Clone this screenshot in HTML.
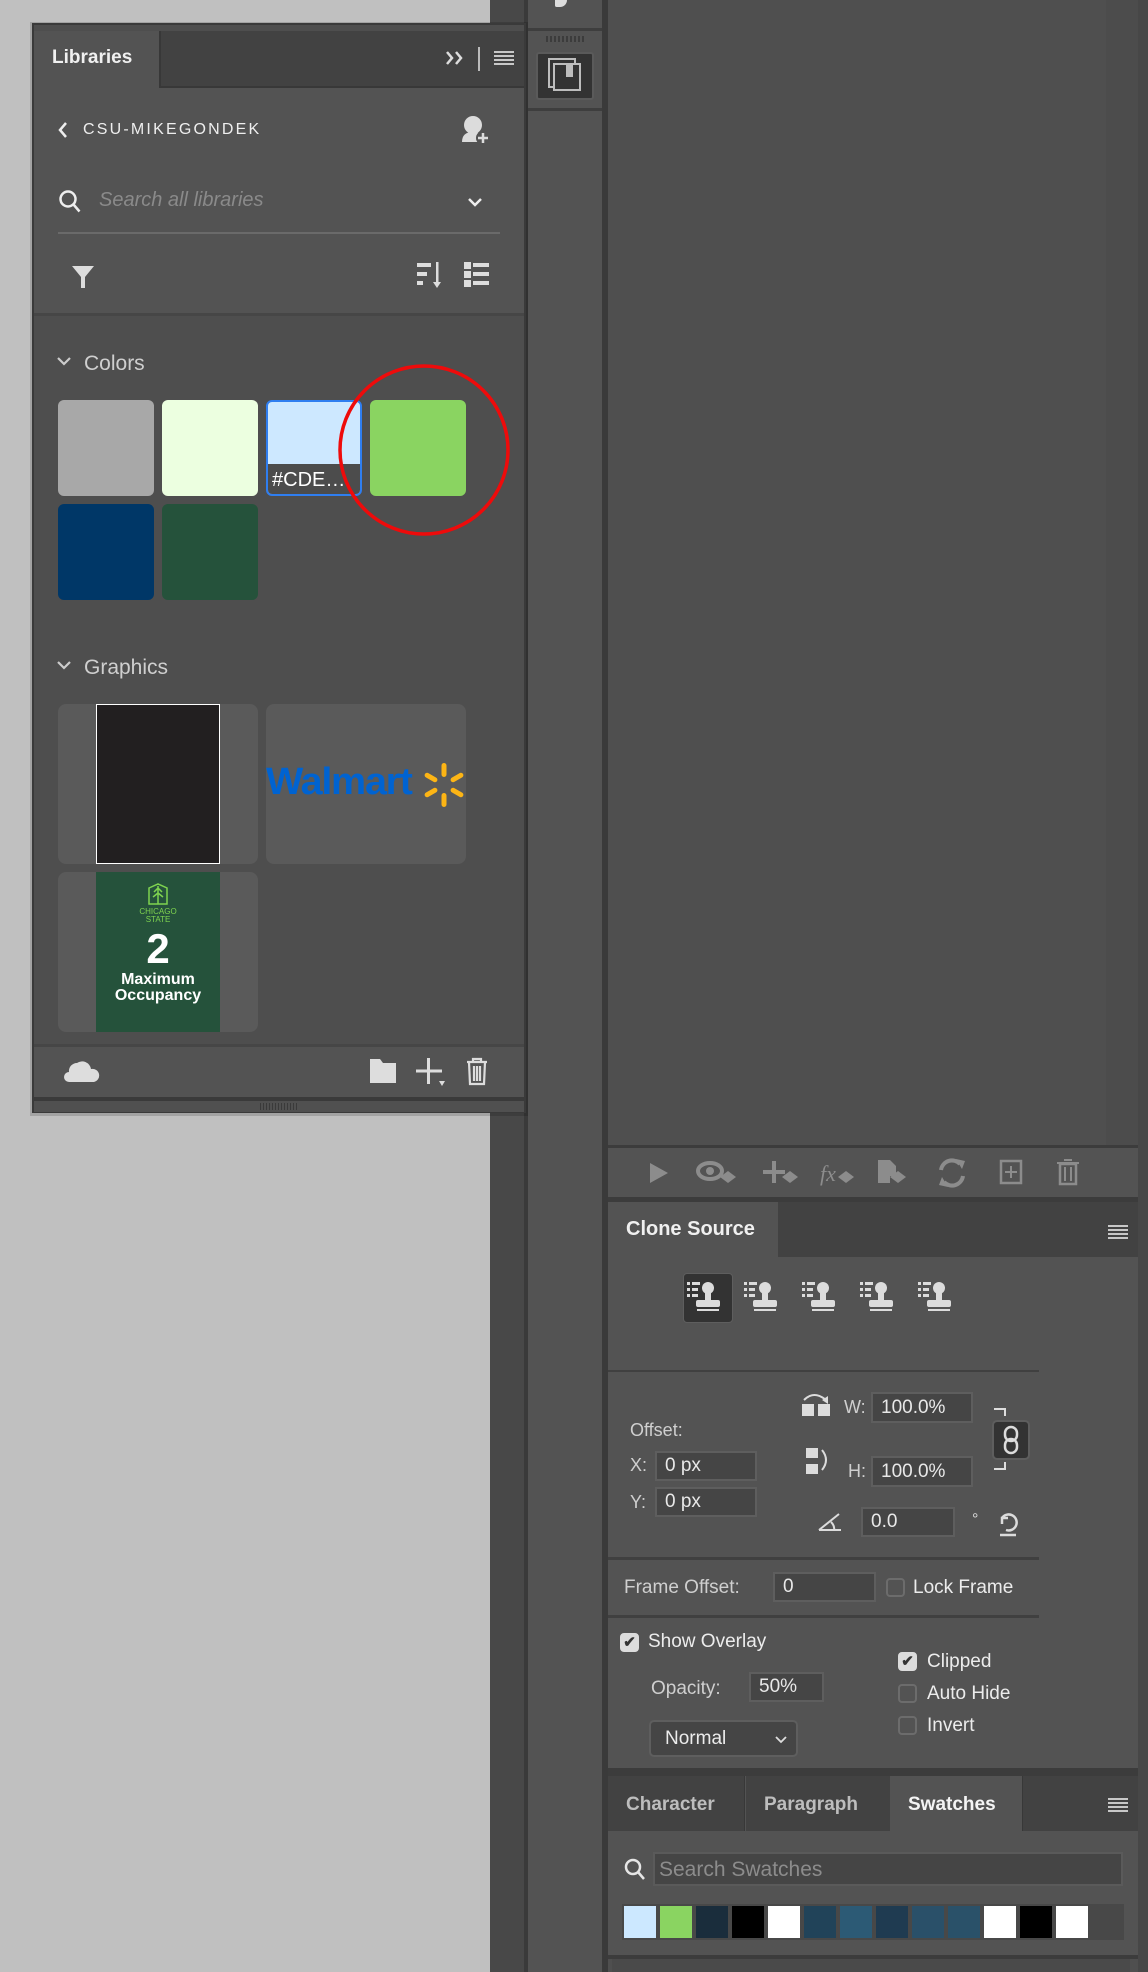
<!DOCTYPE html>
<html><head><meta charset="utf-8"><style>
*{margin:0;padding:0;box-sizing:border-box}
body{width:1148px;height:1972px;background:#c0c0c0;position:relative;overflow:hidden;font-family:"Liberation Sans",sans-serif;color:#e6e6e6}
.a{position:absolute}
.t{position:absolute;white-space:nowrap;line-height:1}
.fld{position:absolute;background:#454545;border:2px solid #5e5e5e;color:#e8e8e8;font-size:19px;padding-left:8px;display:flex;align-items:center}
.cb{position:absolute;width:19px;height:19px;border:2px solid #6c6c6c;border-radius:4px}
.cbk{background:#dcdcdc;border-color:#dcdcdc}
.sw{position:absolute;top:1906px;width:32px;height:32px}
</style></head><body>

<div class="a" style="left:490px;top:0;width:38px;height:1972px;background:#484848"></div>
<div class="a" style="left:524px;top:0;width:4px;height:1972px;background:#3a3a3a"></div>
<div class="a" style="left:528px;top:0;width:74px;height:1972px;background:#535353"></div>
<div class="a" style="left:528px;top:28px;width:74px;height:3px;background:#3e3e3e"></div>
<div class="a" style="left:528px;top:108px;width:74px;height:3px;background:#3e3e3e"></div>
<div class="a" style="left:546px;top:36px;width:40px;height:6px;background:repeating-linear-gradient(90deg,#3c3c3c 0 2px,transparent 2px 4px)"></div>
<div class="a" style="left:536px;top:52px;width:58px;height:48px;background:#333;border:2px solid #5a5a5a;border-radius:3px"></div>
<div class="a" style="left:548px;top:58px;width:28px;height:30px;border:2px solid #bdbdbd"></div>
<div class="a" style="left:553px;top:63px;width:28px;height:28px;border:2px solid #bdbdbd;background:#333"></div>
<div class="a" style="left:566px;top:63px;width:7px;height:14px;background:#bdbdbd"></div>
<div class="a" style="left:555px;top:0;width:12px;height:7px;background:#ddd;border-radius:0 0 8px 2px"></div>
<div class="a" style="left:602px;top:0;width:6px;height:1972px;background:#3a3a3a"></div>

<div class="a" style="left:608px;top:0;width:540px;height:1972px;background:#4f4f4f"></div>
<div class="a" style="left:1138px;top:0;width:10px;height:1972px;background:#474747"></div>
<div class="a" style="left:1106px;top:0;width:32px;height:1147px;background:#4c4c4c"></div>

<div class="a" style="left:608px;top:1145px;width:530px;height:3px;background:#3c3c3c"></div>
<div class="a" style="left:608px;top:1148px;width:530px;height:50px;background:#535353"></div>
<div class="a" style="left:608px;top:1197px;width:530px;height:5px;background:#3c3c3c"></div>
<svg class="a" style="left:640px;top:1155px" width="480" height="40" viewBox="0 0 480 40" fill="#8c8c8c" stroke="#8c8c8c">
<polygon points="10,8 28,18 10,28" stroke="none"/>
<ellipse cx="70" cy="16" rx="12" ry="8" fill="none" stroke-width="4"/><circle cx="70" cy="16" r="4" stroke="none"/><polygon points="80,22 88,16 96,22 88,28" stroke="none"/>
<path d="M134 6v22M123 17h22" stroke-width="4" fill="none"/><polygon points="142,22 150,16 158,22 150,28" stroke="none"/>
<text x="180" y="26" font-family="Liberation Serif" font-style="italic" font-size="22" stroke="none">fx</text><polygon points="198,22 206,16 214,22 206,28" stroke="none"/>
<path d="M238 5h12l6 6v10h-6v7h-12z" stroke="none"/><polygon points="250,22 258,16 266,22 258,28" stroke="none"/>
<path d="M301 15a11 11 0 0 1 19-6M323 21a11 11 0 0 1-19 6" fill="none" stroke-width="4"/><polygon points="316,4 325,6 322,14" stroke="none"/><polygon points="308,32 299,30 302,22" stroke="none"/>
<rect x="361" y="6" width="20" height="22" fill="none" stroke-width="2.5"/><path d="M371 11v12M365 17h12" stroke-width="2"/>
<rect x="420" y="9" width="16" height="20" fill="none" stroke-width="2.5"/><path d="M417 8h22M424 5h8M425 12v14M431 12v14" stroke-width="2"/>
</svg>

<div class="a" style="left:608px;top:1202px;width:530px;height:566px;background:#535353"></div>
<div class="a" style="left:778px;top:1202px;width:360px;height:55px;background:#424242"></div>
<div class="t" style="left:626px;top:1219px;font-size:20px;font-weight:bold;color:#f0f0f0">Clone Source</div>
<div class="a" style="left:1108px;top:1225px;width:20px;height:14px;background:repeating-linear-gradient(#c8c8c8 0 2px,transparent 2px 4px)"></div>
<div class="a" style="left:683px;top:1273px;width:50px;height:50px;background:#333;border:1px solid #5e5e5e;border-radius:4px"></div>
<svg class="a" style="left:683px;top:1278px" width="280" height="40" viewBox="0 0 280 40" fill="#dcdcdc">
<g id="st"><rect x="4" y="4" width="3" height="3"/><rect x="9" y="4" width="8" height="3"/><rect x="4" y="10" width="3" height="3"/><rect x="9" y="10" width="6" height="3"/><rect x="4" y="16" width="3" height="3"/><rect x="9" y="16" width="6" height="3"/><circle cx="25" cy="10" r="6"/><rect x="22" y="12" width="6" height="12"/><rect x="13" y="22" width="24" height="7" rx="2"/><rect x="14" y="31" width="22" height="2"/></g>
<use href="#st" x="57"/><use href="#st" x="115"/><use href="#st" x="173"/><use href="#st" x="231"/>
</svg>
<div class="a" style="left:608px;top:1370px;width:431px;height:2px;background:#404040"></div>
<div class="t" style="left:630px;top:1421px;font-size:18px;color:#cfcfcf">Offset:</div>
<div class="t" style="left:630px;top:1456px;font-size:18px;color:#cfcfcf">X:</div>
<div class="t" style="left:630px;top:1493px;font-size:18px;color:#cfcfcf">Y:</div>
<div class="fld" style="left:655px;top:1451px;width:102px;height:30px">0 px</div>
<div class="fld" style="left:655px;top:1487px;width:102px;height:30px">0 px</div>
<svg class="a" style="left:800px;top:1390px" width="40" height="100" viewBox="0 0 40 100" fill="#dcdcdc" stroke="#dcdcdc">
<rect x="2" y="14" width="12" height="12" stroke="none"/><rect x="18" y="14" width="12" height="12" stroke="none"/><path d="M4 10q10-10 22 0" fill="none" stroke-width="2"/><polygon points="28,6 28,14 22,10" stroke="none"/>
<rect x="6" y="58" width="12" height="10" stroke="none"/><rect x="6" y="74" width="12" height="10" stroke="none"/><path d="M22 60q8 10 0 20" fill="none" stroke-width="2"/>
</svg>
<svg class="a" style="left:815px;top:1506px" width="30" height="30" viewBox="0 0 30 30" fill="none" stroke="#dcdcdc" stroke-width="2"><path d="M4 24h22M4 24L24 8M16 16q4 4 3 8"/></svg>
<div class="t" style="left:844px;top:1398px;font-size:18px;color:#cfcfcf">W:</div>
<div class="t" style="left:848px;top:1462px;font-size:18px;color:#cfcfcf">H:</div>
<div class="fld" style="left:871px;top:1392px;width:102px;height:31px">100.0%</div>
<div class="fld" style="left:871px;top:1456px;width:102px;height:31px">100.0%</div>
<div class="fld" style="left:861px;top:1507px;width:94px;height:30px">0.0</div>
<div class="t" style="left:972px;top:1512px;font-size:16px;color:#ddd">°</div>
<svg class="a" style="left:992px;top:1508px" width="30" height="30" viewBox="0 0 30 30" fill="none" stroke="#dcdcdc" stroke-width="2.5"><path d="M10 10a8 8 0 1 1 4 12M10 16V10h6M8 27h16"/></svg>
<div class="a" style="left:994px;top:1408px;width:12px;height:8px;border-top:2px solid #ddd;border-right:2px solid #ddd"></div>
<div class="a" style="left:994px;top:1462px;width:12px;height:8px;border-bottom:2px solid #ddd;border-right:2px solid #ddd"></div>
<div class="a" style="left:992px;top:1420px;width:38px;height:40px;background:#333;border:2px solid #5e5e5e;border-radius:5px"></div>
<svg class="a" style="left:1001px;top:1424px" width="20" height="32" viewBox="0 0 20 32" fill="none" stroke="#dcdcdc" stroke-width="2.5"><rect x="4" y="3" width="12" height="14" rx="6"/><rect x="4" y="15" width="12" height="14" rx="6"/></svg>
<div class="a" style="left:608px;top:1557px;width:431px;height:3px;background:#404040"></div>
<div class="t" style="left:624px;top:1578px;font-size:19px;color:#cfcfcf">Frame Offset:</div>
<div class="fld" style="left:773px;top:1572px;width:103px;height:30px">0</div>
<div class="cb" style="left:886px;top:1578px"></div>
<div class="t" style="left:913px;top:1578px;font-size:19px;color:#ececec">Lock Frame</div>
<div class="a" style="left:608px;top:1615px;width:431px;height:3px;background:#404040"></div>
<div class="cb cbk" style="left:620px;top:1633px;color:#333;font-size:15px;line-height:16px;text-align:center;font-weight:bold">✔</div>
<div class="t" style="left:648px;top:1632px;font-size:19px;color:#ececec">Show Overlay</div>
<div class="t" style="left:651px;top:1679px;font-size:19px;color:#cfcfcf">Opacity:</div>
<div class="fld" style="left:749px;top:1672px;width:75px;height:30px">50%</div>
<div class="a" style="left:649px;top:1720px;width:149px;height:37px;background:#454545;border:2px solid #5e5e5e;border-radius:5px"></div>
<div class="t" style="left:665px;top:1729px;font-size:19px;color:#ececec">Normal</div>
<svg class="a" style="left:774px;top:1734px" width="14" height="10" viewBox="0 0 14 10" fill="none" stroke="#ddd" stroke-width="1.8"><path d="M2 3l5 5 5-5"/></svg>
<div class="cb cbk" style="left:898px;top:1652px;color:#333;font-size:15px;line-height:16px;text-align:center;font-weight:bold">✔</div>
<div class="t" style="left:927px;top:1652px;font-size:19px;color:#ececec">Clipped</div>
<div class="cb" style="left:898px;top:1684px"></div>
<div class="t" style="left:927px;top:1684px;font-size:19px;color:#ececec">Auto Hide</div>
<div class="cb" style="left:898px;top:1716px"></div>
<div class="t" style="left:927px;top:1716px;font-size:19px;color:#ececec">Invert</div>
<div class="a" style="left:608px;top:1768px;width:530px;height:8px;background:#3c3c3c"></div>

<div class="a" style="left:608px;top:1776px;width:530px;height:180px;background:#535353"></div>
<div class="a" style="left:608px;top:1776px;width:137px;height:55px;background:#424242;border-right:1px solid #383838"></div>
<div class="a" style="left:746px;top:1776px;width:144px;height:55px;background:#424242"></div>
<div class="a" style="left:1022px;top:1776px;width:116px;height:55px;background:#424242;border-left:1px solid #383838"></div>
<div class="t" style="left:626px;top:1795px;font-size:19px;font-weight:bold;color:#bdbdbd">Character</div>
<div class="t" style="left:764px;top:1795px;font-size:19px;font-weight:bold;color:#bdbdbd">Paragraph</div>
<div class="t" style="left:908px;top:1795px;font-size:19px;font-weight:bold;color:#f4f4f4">Swatches</div>
<div class="a" style="left:1108px;top:1798px;width:20px;height:14px;background:repeating-linear-gradient(#c8c8c8 0 2px,transparent 2px 4px)"></div>
<svg class="a" style="left:624px;top:1858px" width="22" height="24" viewBox="0 0 22 24" fill="none" stroke="#e6e6e6" stroke-width="2.5"><circle cx="9" cy="9" r="7"/><path d="M14 14l6 7"/></svg>
<div class="a" style="left:653px;top:1852px;width:470px;height:34px;background:#454545;border:2px solid #5a5a5a"></div>
<div class="t" style="left:659px;top:1859px;font-size:21px;color:#8c8c8c">Search Swatches</div>
<div class="a" style="left:622px;top:1904px;width:502px;height:36px;background:#484848"></div>
<div class="sw" style="left:624px;background:#cce8ff"></div>
<div class="sw" style="left:660px;background:#8ad461"></div>
<div class="sw" style="left:696px;background:#1a2d3c"></div>
<div class="sw" style="left:732px;background:#000"></div>
<div class="sw" style="left:768px;background:#fff"></div>
<div class="sw" style="left:804px;background:#214359"></div>
<div class="sw" style="left:840px;background:#2c5a75"></div>
<div class="sw" style="left:876px;background:#1f3b51"></div>
<div class="sw" style="left:912px;background:#2a5069"></div>
<div class="sw" style="left:948px;background:#2a5169"></div>
<div class="sw" style="left:984px;background:#fff"></div>
<div class="sw" style="left:1020px;background:#000"></div>
<div class="sw" style="left:1056px;background:#fff"></div>
<div class="a" style="left:608px;top:1955px;width:530px;height:4px;background:#3c3c3c"></div>
<div class="a" style="left:612px;top:1959px;width:518px;height:13px;background:#4a4a4a"></div>

<div class="a" style="left:30px;top:22px;width:498px;height:1094px;background:rgba(0,0,0,0.15)"></div>
<div class="a" style="left:32px;top:23px;width:494px;height:1090px;background:#4e4e4e;border:2px solid #3a3a3a"></div>
<div class="a" style="left:34px;top:31px;width:490px;height:56px;background:#424242"></div>
<div class="a" style="left:34px;top:31px;width:127px;height:57px;background:#535353;border-right:2px solid #383838"></div>
<div class="a" style="left:161px;top:86px;width:363px;height:2px;background:#383838"></div>
<div class="t" style="left:52px;top:48px;font-size:19px;font-weight:bold;color:#f0f0f0">Libraries</div>
<svg class="a" style="left:444px;top:49px" width="22" height="18" viewBox="0 0 22 18" fill="none" stroke="#ddd" stroke-width="2.5"><path d="M3 3l5 6-5 6M12 3l5 6-5 6"/></svg>
<div class="a" style="left:478px;top:47px;width:2px;height:24px;background:#bbb"></div>
<div class="a" style="left:494px;top:51px;width:20px;height:14px;background:repeating-linear-gradient(#c8c8c8 0 2px,transparent 2px 4px)"></div>
<div class="a" style="left:34px;top:88px;width:490px;height:227px;background:#535353"></div>
<svg class="a" style="left:56px;top:120px" width="14" height="20" viewBox="0 0 14 20" fill="none" stroke="#eee" stroke-width="2.5"><path d="M10 3L4 10l6 7"/></svg>
<div class="t" style="left:83px;top:122px;font-size:16px;color:#eee;letter-spacing:2.2px">CSU-MIKEGONDEK</div>
<svg class="a" style="left:458px;top:114px" width="34" height="32" viewBox="0 0 34 32" fill="#dcdcdc"><circle cx="15" cy="11" r="9"/><path d="M4 28q0-10 11-10t11 10z"/><circle cx="25" cy="24" r="7" fill="#535353"/><path d="M25 19v10M20 24h10" stroke="#dcdcdc" stroke-width="2.5"/></svg>
<svg class="a" style="left:58px;top:189px" width="26" height="26" viewBox="0 0 26 26" fill="none" stroke="#eee" stroke-width="2.5"><circle cx="10" cy="10" r="7.5"/><path d="M15.5 15.5l6 7"/></svg>
<div class="t" style="left:99px;top:190px;font-size:20px;font-style:italic;color:#8a8a8a">Search all libraries</div>
<svg class="a" style="left:466px;top:196px" width="18" height="12" viewBox="0 0 18 12" fill="none" stroke="#eee" stroke-width="2.5"><path d="M3 3l6 6 6-6"/></svg>
<div class="a" style="left:58px;top:232px;width:442px;height:2px;background:#6a6a6a"></div>
<svg class="a" style="left:70px;top:264px" width="26" height="26" viewBox="0 0 26 26" fill="#ddd"><path d="M2 2h22L15 13v11h-4V13z"/></svg>
<svg class="a" style="left:415px;top:260px" width="80" height="30" viewBox="0 0 80 30" fill="#ddd"><rect x="2" y="3" width="14" height="4"/><rect x="2" y="12" width="10" height="4"/><rect x="2" y="21" width="6" height="4"/><rect x="21" y="2" width="2.5" height="22"/><path d="M18 22l4 6 4-6z"/><rect x="49" y="2" width="7" height="7"/><rect x="58" y="3" width="16" height="4"/><rect x="49" y="11" width="7" height="7"/><rect x="58" y="12" width="16" height="4"/><rect x="49" y="20" width="7" height="7"/><rect x="58" y="21" width="16" height="4"/></svg>
<div class="a" style="left:34px;top:313px;width:490px;height:3px;background:#464646"></div>

<svg class="a" style="left:56px;top:356px" width="16" height="12" viewBox="0 0 16 12" fill="none" stroke="#ccc" stroke-width="2.2"><path d="M2 2l6 6 6-6"/></svg>
<div class="t" style="left:84px;top:353px;font-size:21px;color:#cfcfcf">Colors</div>
<div class="a" style="left:58px;top:400px;width:96px;height:96px;background:#a8a8a8;border-radius:6px"></div>
<div class="a" style="left:162px;top:400px;width:96px;height:96px;background:#ecffe0;border-radius:6px"></div>
<div class="a" style="left:266px;top:400px;width:96px;height:96px;background:#cde8ff;border:2px solid #2f7ef0;border-radius:6px;overflow:hidden"><div class="a" style="left:0;top:62px;width:92px;height:34px;background:#4c4c4c"></div><div class="t" style="left:4px;top:68px;font-size:20px;color:#fff">#CDE…</div></div>
<div class="a" style="left:370px;top:400px;width:96px;height:96px;background:#8ad461;border-radius:6px"></div>
<div class="a" style="left:58px;top:504px;width:96px;height:96px;background:#003767;border-radius:6px"></div>
<div class="a" style="left:162px;top:504px;width:96px;height:96px;background:#25523b;border-radius:6px"></div>
<svg class="a" style="left:334px;top:364px" width="180" height="180" viewBox="0 0 180 180"><ellipse cx="90" cy="86" rx="84" ry="84" fill="none" stroke="#ee0b0b" stroke-width="3.5"/></svg>

<svg class="a" style="left:56px;top:660px" width="16" height="12" viewBox="0 0 16 12" fill="none" stroke="#ccc" stroke-width="2.2"><path d="M2 2l6 6 6-6"/></svg>
<div class="t" style="left:84px;top:657px;font-size:21px;color:#cfcfcf">Graphics</div>
<div class="a" style="left:58px;top:704px;width:200px;height:160px;background:#5a5a5a;border-radius:8px"></div>
<div class="a" style="left:96px;top:704px;width:124px;height:160px;background:#221f20;border:1.5px solid #fff"></div>
<div class="a" style="left:266px;top:704px;width:200px;height:160px;background:#5a5a5a;border-radius:8px;overflow:hidden">
<div class="t" style="left:0px;top:59px;font-size:38px;font-weight:bold;color:#0063d1;letter-spacing:-1.2px;transform:scaleX(1.04);transform-origin:left">Walmart</div>
<svg class="a" style="left:155px;top:56px" width="46" height="50" viewBox="0 0 46 50" fill="#fdb515"><g transform="translate(23,25)"><rect x="-2.5" y="-22" width="5" height="14" rx="2.5"/><rect x="-2.5" y="-22" width="5" height="14" rx="2.5" transform="rotate(60)"/><rect x="-2.5" y="-22" width="5" height="14" rx="2.5" transform="rotate(120)"/><rect x="-2.5" y="-22" width="5" height="14" rx="2.5" transform="rotate(180)"/><rect x="-2.5" y="-22" width="5" height="14" rx="2.5" transform="rotate(240)"/><rect x="-2.5" y="-22" width="5" height="14" rx="2.5" transform="rotate(300)"/></g></svg>
</div>
<div class="a" style="left:58px;top:872px;width:200px;height:160px;background:#5a5a5a;border-radius:8px"></div>
<div class="a" style="left:96px;top:872px;width:124px;height:160px;background:#25523b">
<svg class="a" style="left:50px;top:10px" width="24" height="24" viewBox="0 0 24 24" fill="none" stroke="#7ed34f" stroke-width="1.5"><path d="M3 6l9-4 9 4v16H3zM12 4v18M8 10l4-4 4 4M7 15l5-4 5 4"/></svg>
<div class="t" style="left:0;width:124px;text-align:center;top:36px;font-size:8px;color:#7ed34f">CHICAGO</div>
<div class="t" style="left:0;width:124px;text-align:center;top:44px;font-size:8px;color:#7ed34f">STATE</div>
<div class="t" style="left:0;width:124px;text-align:center;top:56px;font-size:42px;font-weight:bold;color:#fff">2</div>
<div class="t" style="left:0;width:124px;text-align:center;top:100px;font-size:16px;font-weight:bold;color:#fff">Maximum</div>
<div class="t" style="left:0;width:124px;text-align:center;top:116px;font-size:16px;font-weight:bold;color:#fff">Occupancy</div>
</div>
<div class="a" style="left:34px;top:1044px;width:490px;height:3px;background:#464646"></div>
<div class="a" style="left:34px;top:1047px;width:490px;height:50px;background:#535353"></div>
<svg class="a" style="left:64px;top:1058px" width="36" height="26" viewBox="0 0 36 26" fill="#ddd"><path d="M5 24a5 5 0 0 1 0-10a8 8 0 0 1 8-9a9 9 0 0 1 14 6a6 6 0 0 1 3 13z"/></svg>
<svg class="a" style="left:368px;top:1056px" width="30" height="30" viewBox="0 0 30 30" fill="#ddd"><path d="M2 3h10l3 4h13v20H2z"/></svg>
<svg class="a" style="left:414px;top:1056px" width="34" height="34" viewBox="0 0 34 34" fill="#ddd"><rect x="13" y="2" width="3" height="26"/><rect x="2" y="13.5" width="26" height="3"/><path d="M25 25h6l-3 5z"/></svg>
<svg class="a" style="left:464px;top:1056px" width="26" height="30" viewBox="0 0 26 30" fill="none" stroke="#ddd" stroke-width="2.2"><path d="M3 6h20M9 6V3h8v3M5 6l1 22h14l1-22M10 10v15M13 10v15M16 10v15"/></svg>
<div class="a" style="left:34px;top:1097px;width:490px;height:4px;background:#3a3a3a"></div>
<div class="a" style="left:34px;top:1101px;width:490px;height:11px;background:#505050"></div>
<div class="a" style="left:260px;top:1103px;width:38px;height:7px;background:repeating-linear-gradient(90deg,#3a3a3a 0 1px,transparent 1px 3px)"></div>
</body></html>
